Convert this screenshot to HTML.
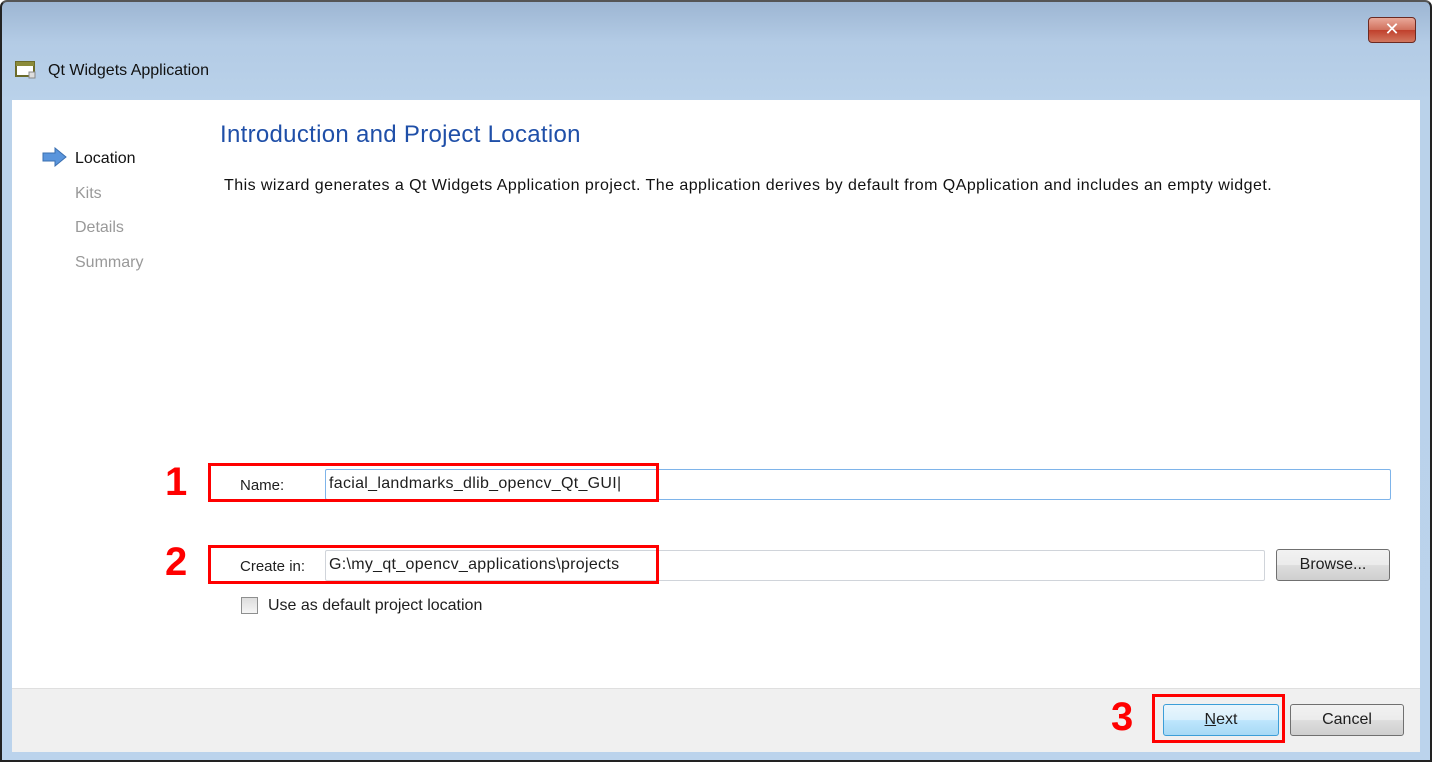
<!DOCTYPE html>
<html><head><meta charset="utf-8"><style>
*{margin:0;padding:0;box-sizing:border-box}
body{width:1432px;height:782px;background:#fff;position:relative;overflow:hidden;font-family:"Liberation Sans","DejaVu Sans",sans-serif;font-size:15px;color:#1e1e1e}
.win{position:absolute;left:0;top:0;width:1432px;height:762px;border:2px solid #222;border-top-color:#555;border-radius:7px 7px 0 0;background:linear-gradient(#9db6d3 0,#b3cbe5 40px,#bad2ea 100px,#bbd3ec 100%)}
.a{position:absolute}
.content{left:10px;top:98px;width:1408px;height:588px;background:#fff}
.footer{left:10px;top:686px;width:1408px;height:64px;background:#f0f0f0;border-top:1px solid #dfdfdf}
.inp{background:#fff;border:1px solid #abadb3;border-radius:2px;height:31px;padding:5px 0 0 3px;font-size:16px;letter-spacing:0.3px}
.btn{border:1px solid #707070;border-radius:3px;background:linear-gradient(#f2f2f2,#ebebeb 50%,#dddddd 51%,#cfcfcf);text-align:center;font-size:16px;padding-top:6px}
.red{border:3px solid #f00}
.num{color:#f00;font-weight:bold;font-size:40px}
</style></head><body>
<div class="win">
 <div class="a" style="left:1366px;top:15px;width:48px;height:26px;border:1px solid #6b2a22;border-radius:4px;background:linear-gradient(#e9a99a,#d0705c 50%,#c0402c 51%,#d2775f);color:#fff;font-weight:bold;font-size:18px;text-align:center;line-height:23px">✕</div>
 <svg class="a" style="left:13px;top:58px" width="22" height="20"><rect x="1" y="2" width="18" height="14" fill="#fff" stroke="#6b6b2a" stroke-width="2"/><rect x="1" y="2" width="18" height="4" fill="#8b8b3a"/><rect x="14" y="12" width="6" height="6" fill="#ddd" stroke="#888"/></svg>
 <div class="a" style="left:46px;top:60px;font-size:16px;color:#111">Qt Widgets Application</div>
 <div class="a content">
  <svg class="a" style="left:30px;top:47px" width="26" height="20"><path d="M1 6h12V1l11 9-11 9v-5H1z" fill="#5a95dc" stroke="#3a6fb0"/></svg>
  <div class="a" style="left:63px;top:50px;font-size:16px;color:#111">Location</div>
  <div class="a" style="left:63px;top:85px;font-size:16px;color:#999">Kits</div>
  <div class="a" style="left:63px;top:119px;font-size:16px;color:#999">Details</div>
  <div class="a" style="left:63px;top:154px;font-size:16px;color:#999">Summary</div>
  <div class="a" style="left:208px;top:21px;font-size:24px;letter-spacing:0.3px;color:#1f4fa8">Introduction and Project Location</div>
  <div class="a" style="left:212px;top:77px;font-size:16px;letter-spacing:0.45px;color:#111;white-space:nowrap">This wizard generates a Qt Widgets Application project. The application derives by default from QApplication and includes an empty widget.</div>
  <div class="a" style="left:228px;top:377px">Name:</div>
  <div class="a inp" style="left:313px;top:369px;width:1066px;border-color:#7eb4ea">facial_landmarks_dlib_opencv_Qt_GUI|</div>
  <div class="a" style="left:228px;top:458px">Create in:</div>
  <div class="a inp" style="left:313px;top:450px;width:940px;border-color:#d0d4da">G:\my_qt_opencv_applications\projects</div>
  <div class="a btn" style="left:1264px;top:449px;width:114px;height:32px">Browse...</div>
  <div class="a" style="left:229px;top:497px;width:17px;height:17px;border:1px solid #8e8f8f;background:linear-gradient(#ddd,#f5f5f5)"></div>
  <div class="a" style="left:256px;top:497px;font-size:16px">Use as default project location</div>
  <div class="a red" style="left:196px;top:363px;width:451px;height:39px"></div>
  <div class="a red" style="left:196px;top:445px;width:451px;height:39px"></div>
  <div class="a num" style="left:153px;top:360px">1</div>
  <div class="a num" style="left:153px;top:440px">2</div>
 </div>
 <div class="a footer">
  <div class="a btn" style="left:1151px;top:15px;width:116px;height:32px;border-color:#3c9ed8;background:linear-gradient(#eaf6fd,#d9f0fc 50%,#bee6fd 51%,#a7d9f5)"><u>N</u>ext</div>
  <div class="a btn" style="left:1278px;top:15px;width:114px;height:32px">Cancel</div>
  <div class="a red" style="left:1140px;top:5px;width:133px;height:49px"></div>
  <div class="a num" style="left:1099px;top:6px">3</div>
 </div>
</div>
</body></html>
